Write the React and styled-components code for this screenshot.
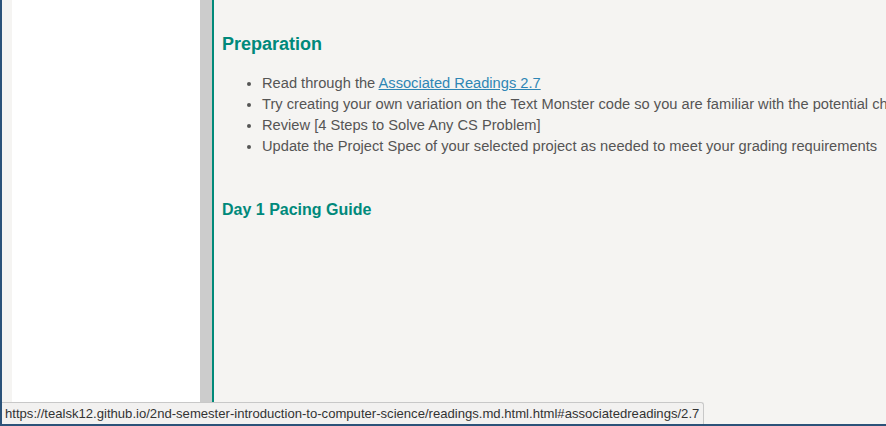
import React from 'react';
import styled, { createGlobalStyle } from 'styled-components';

const Global = createGlobalStyle`
  html, body {
    margin: 0;
    padding: 0;
    overflow: hidden;
  }
  body {
    font-family: "Liberation Sans", Arial, sans-serif;
  }
`;

const Frame = styled.div`
  position: relative;
  display: flex;
  height: 426px;
  box-sizing: border-box;
  border-left: 2px solid #2b5279;
  border-bottom: 2px solid #2b5279;
  background: #f5f4f2;
  overflow: hidden;
`;

const Sidebar = styled.nav`
  width: 188px;
  margin-left: 10px;
  background: #ffffff;
  flex-shrink: 0;
`;

const Gutter = styled.div`
  width: 12px;
  background: #cccccc;
  flex-shrink: 0;
`;

const Content = styled.main`
  flex: 1;
  border-left: 2px solid #008a7a;
  padding: 33px 0 0 8px;
  color: #555555;
  white-space: nowrap;
  overflow: hidden;
`;

const Heading = styled.h2`
  margin: 0;
  font-size: ${p => p.size}px;
  font-weight: bold;
  color: #00897b;
  line-height: 22px;
`;

const List = styled.ul`
  margin: 18px 0 42px;
  padding-left: 40px;
  font-size: 14.67px;
  line-height: 21px;
`;

const Link = styled.a`
  color: #2e86b5;
  text-decoration: underline;
`;

const StatusTip = styled.div`
  position: absolute;
  left: 0;
  bottom: 0;
  padding: 2px 4px 2px 3px;
  font-size: 13.1px;
  line-height: 17px;
  color: #333333;
  background: #f2f1f0;
  border-top: 1px solid #c8c8c8;
  border-right: 1px solid #c8c8c8;
  border-top-right-radius: 3px;
`;

export default function App() {
  return (
    <>
      <Global />
      <Frame>
        <Sidebar />
        <Gutter />
        <Content>
          <Heading size={18}>Preparation</Heading>
          <List>
            <li>
              Read through the <Link href="#associatedreadings/2.7">Associated Readings 2.7</Link>
            </li>
            <li>Try creating your own variation on the Text Monster code so you are familiar with the potential challenges</li>
            <li>Review [4 Steps to Solve Any CS Problem]</li>
            <li>Update the Project Spec of your selected project as needed to meet your grading requirements</li>
          </List>
          <Heading size={16}>Day 1 Pacing Guide</Heading>
        </Content>
        <StatusTip>
          https://tealsk12.github.io/2nd-semester-introduction-to-computer-science/readings.md.html.html#associatedreadings/2.7
        </StatusTip>
      </Frame>
    </>
  );
}
